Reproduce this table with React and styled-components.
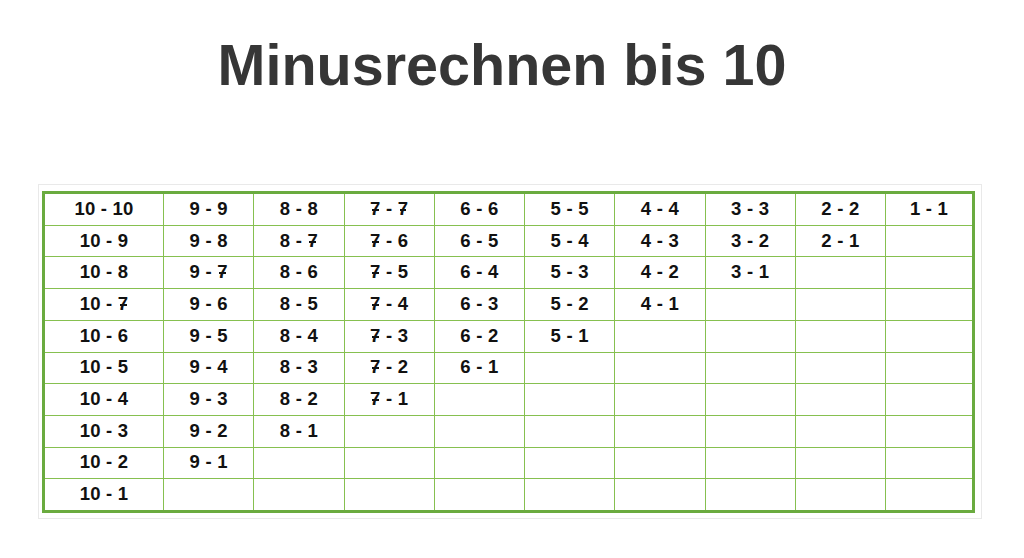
import React from 'react';
import styled, { createGlobalStyle } from 'styled-components';

const GlobalStyle = createGlobalStyle`
    html, body {
        margin: 0;
        padding: 0;
        background: #ffffff;
    }
    body {
        font-family: "Liberation Sans", Arial, sans-serif;
    }
`;

const Page = styled.div`
    width: 1024px;
    height: 558px;
    overflow: hidden;
    display: flex;
    flex-direction: column;
    align-items: center;
`;

const Title = styled.h1`
    margin: 37px 20px 0 0;
    font-size: 57.5px;
    line-height: 57px;
    font-weight: 700;
    color: #363636;
`;

const Frame = styled.div`
    box-sizing: border-box;
    margin: 90px 0 0 -4px;
    width: 944px;
    height: 335px;
    border: 1px solid #e9e9e9;
    padding: 6px 6px 6px 3px;
`;

const Grid = styled.div`
    box-sizing: border-box;
    width: 933px;
    height: 322px;
    border: 3px solid #6aab3f;
    background: #86c050;
    display: grid;
    grid-template-columns: 118px repeat(8, 89.25px) 1fr;
    grid-template-rows: repeat(10, 1fr);
    gap: 1px;
`;

const Cell = styled.div`
    background: #ffffff;
    display: flex;
    align-items: center;
    justify-content: center;
    font-size: 18.5px;
    font-weight: 700;
    letter-spacing: 0.2px;
    color: #111111;
    padding-bottom: 1px;
`;

const Term = styled.span`
    white-space: pre;
`;

const Seven = styled.span`
    position: relative;
    display: inline-block;
    &::after {
        content: '';
        position: absolute;
        left: 18%;
        right: 16%;
        top: 50%;
        height: 2px;
        background: #111111;
    }
`;

function Num({ value }) {
    return String(value)
        .split('')
        .map((d, i) => (d === '7' ? <Seven key={i}>7</Seven> : <span key={i}>{d}</span>));
}

function App() {
    const cells = [];
    for (let r = 0; r < 10; r++) {
        for (let c = 0; c < 10; c++) {
            const a = 10 - c;
            const b = a - r;
            cells.push(
                <Cell key={`${r}-${c}`}>
                    {b >= 1 ? (
                        <Term>
                            <Num value={a} />
                            {' - '}
                            <Num value={b} />
                        </Term>
                    ) : null}
                </Cell>
            );
        }
    }

    return (
        <Page>
            <GlobalStyle />
            <Title>Minusrechnen bis 10</Title>
            <Frame>
                <Grid>{cells}</Grid>
            </Frame>
        </Page>
    );
}

export default App;
